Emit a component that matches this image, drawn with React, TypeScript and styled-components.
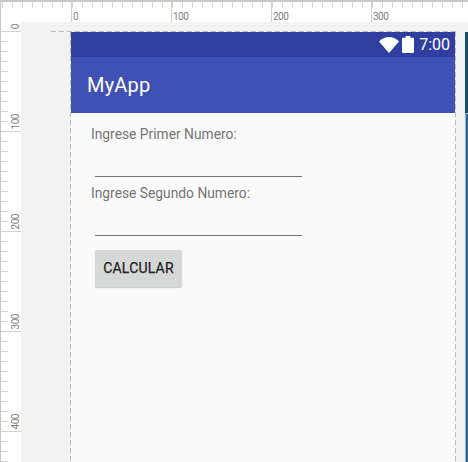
import styled, { createGlobalStyle } from 'styled-components'

const GlobalStyle = createGlobalStyle`
  html, body {
    margin: 0;
    padding: 0;
    background: #fff;
    overflow: hidden;
  }
`

const topMarks = [0, 100, 200, 300]
const leftMarks = [100, 200, 300, 400]

export default function App() {
  return (
    <Editor>
      <GlobalStyle />
      <TopRuler>
        <RulerLead />
        {topMarks.map(m => (
          <TopCell key={m}>
            <TopLabel>{m}</TopLabel>
          </TopCell>
        ))}
      </TopRuler>
      <Body>
        <LeftRuler>
          <LeftZero>
            <LeftLabel>0</LeftLabel>
          </LeftZero>
          {leftMarks.map(m => (
            <LeftCell key={m}>
              <LeftLabel>{m}</LeftLabel>
            </LeftCell>
          ))}
        </LeftRuler>
        <Canvas>
          <GuideTop />
          <Device>
            <GuideLeft />
            <GuideRight />
            <StatusBar>
              <WifiIcon viewBox="0 0 20 16">
                <path d="M0 4.500C2.700 1.700 6.200 0 10 0s7.300 1.700 10 4.500L10 16z" fill="#fff" />
              </WifiIcon>
              <BatteryIcon viewBox="0 0 12 17">
                <path d="M3.600 0h4.800v1.700H11a1 1 0 0 1 1 1V16a1 1 0 0 1-1 1H1a1 1 0 0 1-1-1V2.700a1 1 0 0 1 1-1h2.600z" fill="#fff" />
              </BatteryIcon>
              <Clock>7:00</Clock>
            </StatusBar>
            <Toolbar>
              <Title>MyApp</Title>
            </Toolbar>
            <Content>
              <FieldLabel>Ingrese Primer Numero:</FieldLabel>
              <FieldLine />
              <FieldLabel>Ingrese Segundo Numero:</FieldLabel>
              <FieldLine />
              <CalcButton>CALCULAR</CalcButton>
            </Content>
          </Device>
          <NextDevice>
            <NextDeviceTop />
            <NextDeviceBody />
          </NextDevice>
        </Canvas>
      </Body>
    </Editor>
  )
}

const Editor = styled.div`
  display: flex;
  flex-direction: column;
  width: 468px;
  height: 462px;
  overflow: hidden;
  font-family: Roboto, "Liberation Sans", sans-serif;
`

const TopRuler = styled.div`
  display: flex;
  flex: none;
  height: 22px;
  box-sizing: border-box;
  border-top: 2px solid #c8c8c8;
  border-left: 1px solid #c8c8c8;
  background-image: repeating-linear-gradient(to right, transparent 0 1px, #d4d4d4 1px 2px, transparent 2px 10px);
  background-size: 100% 6px;
  background-repeat: no-repeat;
`

const RulerLead = styled.div`
  flex: none;
  width: 70px;
`

const TopCell = styled.div`
  flex: none;
  width: 100px;
  box-sizing: border-box;
  border-left: 1px solid #d0d0d0;
`

const TopLabel = styled.span`
  display: block;
  margin: 10px 0 0 1px;
  font-size: 10px;
  letter-spacing: -0.5px;
  line-height: 10px;
  color: #808080;
`

const Body = styled.div`
  display: flex;
  flex: 1;
  min-height: 0;
`

const LeftRuler = styled.div`
  display: flex;
  flex: none;
  flex-direction: column;
  width: 21px;
  box-sizing: border-box;
  border-left: 1px solid #c8c8c8;
  background-image: repeating-linear-gradient(to bottom, transparent 0 9px, #d4d4d4 9px 10px);
  background-size: 7px 100%;
  background-repeat: no-repeat;
`

const LeftZero = styled.div`
  flex: none;
  display: flex;
  justify-content: flex-end;
  align-items: flex-end;
  height: 10px;
  box-sizing: border-box;
  border-bottom: 1px solid #d0d0d0;
`

const LeftCell = styled.div`
  flex: none;
  display: flex;
  justify-content: flex-end;
  align-items: flex-end;
  height: 100px;
  box-sizing: border-box;
  border-bottom: 1px solid #d0d0d0;
`

const LeftLabel = styled.span`
  writing-mode: vertical-rl;
  transform: rotate(180deg);
  margin: 0 0 2px;
  font-size: 10px;
  letter-spacing: -0.5px;
  line-height: 10px;
  color: #808080;
`

const Canvas = styled.div`
  position: relative;
  display: flex;
  flex: 1;
  align-items: flex-start;
  padding: 10px 0 0 50px;
  background: #f2f2f2;
`

const GuideTop = styled.div`
  position: absolute;
  left: 30px;
  right: 12px;
  top: 9px;
  height: 1px;
  background: repeating-linear-gradient(to right, #bcbcbc 0 5px, transparent 5px 8px);
`

const GuideLeft = styled.div`
  position: absolute;
  left: -1px;
  top: 0;
  bottom: 0;
  width: 1px;
  background: repeating-linear-gradient(to bottom, #bcbcbc 0 5px, transparent 5px 8px);
`

const GuideRight = styled(GuideLeft)`
  left: auto;
  right: -1px;
`

const Device = styled.div`
  position: relative;
  display: flex;
  flex: none;
  flex-direction: column;
  width: 384px;
  height: 430px;
  background: #fafafa;
`

const StatusBar = styled.div`
  display: flex;
  flex: none;
  align-items: center;
  justify-content: flex-end;
  height: 25px;
  padding-right: 5px;
  background: #303f9f;
`

const WifiIcon = styled.svg`
  width: 20px;
  height: 16px;
`

const BatteryIcon = styled.svg`
  width: 12px;
  height: 17px;
  margin-left: 3px;
`

const Clock = styled.span`
  margin-left: 5px;
  font-size: 16px;
  color: #fff;
`

const Toolbar = styled.div`
  display: flex;
  flex: none;
  align-items: center;
  height: 56px;
  padding-left: 16px;
  background: #3f51b5;
`

const Title = styled.span`
  font-size: 20px;
  letter-spacing: 0.2px;
  color: #fff;
`

const Content = styled.div`
  display: flex;
  flex: 1;
  flex-direction: column;
  align-items: flex-start;
  padding: 13px 0 0 20px;
`

const FieldLabel = styled.div`
  font-size: 13.800px;
  line-height: 17px;
  color: #757575;
`

const FieldLine = styled.div`
  width: 207px;
  height: 1px;
  margin: 33px 0 8px 4px;
  background: #757575;
`

const CalcButton = styled.button`
  width: 87px;
  height: 37px;
  margin: 6px 0 0 4px;
  padding: 0 0 2px;
  border: none;
  border-radius: 2px;
  background: #d6d7d7;
  box-shadow: 0 1px 1px rgba(0, 0, 0, 0.2);
  font-family: inherit;
  font-size: 14px;
  letter-spacing: 0.2px;
  -webkit-text-stroke: 0.25px #212121;
  color: #212121;
`

const NextDevice = styled.div`
  display: flex;
  flex: none;
  flex-direction: column;
  width: 3px;
  height: 430px;
  margin-left: 10px;
`

const NextDeviceTop = styled.div`
  height: 81px;
  background: #1d4f6e;
`

const NextDeviceBody = styled.div`
  flex: 1;
  box-sizing: border-box;
  border-top: 1px solid #8ab8dc;
  border-left: 1px solid #8ab8dc;
  background: #2a6496;
`
